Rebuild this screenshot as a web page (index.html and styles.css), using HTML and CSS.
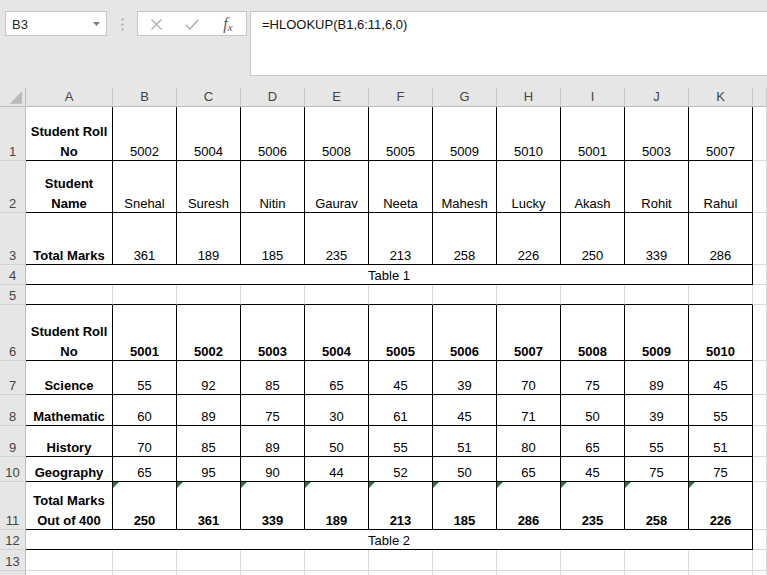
FILE: index.html
```html
<!DOCTYPE html>
<html>
<head>
<meta charset="utf-8">
<title>HLOOKUP</title>
<link rel="stylesheet" href="styles.css">
</head>
<body>
<div class="bar">
  <div class="namebox"><span>B3</span><svg width="7" height="4" viewBox="0 0 7 4"><path d="M0 0H7L3.5 4Z" fill="#7a7a7a"/></svg></div>
  <div class="grip"><svg width="3" height="13" viewBox="0 0 3 13"><circle cx="1.5" cy="1.5" r="1.1" fill="#a3a3a3"/><circle cx="1.5" cy="6.5" r="1.1" fill="#a3a3a3"/><circle cx="1.5" cy="11.5" r="1.1" fill="#a3a3a3"/></svg></div>
  <div class="fxbox">
    <span class="slot"><svg width="11" height="11" viewBox="0 0 11 11"><path d="M0.5 0.5L10.5 10.5M10.5 0.5L0.5 10.5" stroke="#ababab" stroke-width="1.3" fill="none"/></svg></span>
    <span class="slot"><svg width="14" height="11" viewBox="0 0 14 11"><path d="M0.8 5.8L5 10L13.2 0.8" stroke="#ababab" stroke-width="1.3" fill="none"/></svg></span>
    <span class="slot fx"><i>f</i><i class="sx">x</i></span>
  </div>
  <div class="formula">=HLOOKUP(B1,6:11,6,0)</div>
</div>

<div class="sheet">
  <div class="corner"><svg width="26" height="18" viewBox="0 0 26 18"><polygon points="23,3 23,16 10,16" fill="#b9b9b9"/></svg></div>
  <div class="ch">A</div><div class="ch">B</div><div class="ch">C</div><div class="ch">D</div><div class="ch">E</div><div class="ch">F</div><div class="ch">G</div><div class="ch">H</div><div class="ch">I</div><div class="ch">J</div><div class="ch">K</div><div class="ch"></div>

  <div class="rh"><span>1</span></div>
  <div class="k b"><span>Student Roll<br>No</span></div>
  <div class="k"><span>5002</span></div><div class="k"><span>5004</span></div><div class="k"><span>5006</span></div><div class="k"><span>5008</span></div><div class="k"><span>5005</span></div><div class="k"><span>5009</span></div><div class="k"><span>5010</span></div><div class="k"><span>5001</span></div><div class="k"><span>5003</span></div><div class="k"><span>5007</span></div>
  <div></div>

  <div class="rh"><span>2</span></div>
  <div class="k b"><span>Student<br>Name</span></div>
  <div class="k"><span>Snehal</span></div><div class="k"><span>Suresh</span></div><div class="k"><span>Nitin</span></div><div class="k"><span>Gaurav</span></div><div class="k"><span>Neeta</span></div><div class="k"><span>Mahesh</span></div><div class="k"><span>Lucky</span></div><div class="k"><span>Akash</span></div><div class="k"><span>Rohit</span></div><div class="k"><span>Rahul</span></div>
  <div></div>

  <div class="rh"><span>3</span></div>
  <div class="k b"><span>Total Marks</span></div>
  <div class="k"><span>361</span></div><div class="k"><span>189</span></div><div class="k"><span>185</span></div><div class="k"><span>235</span></div><div class="k"><span>213</span></div><div class="k"><span>258</span></div><div class="k"><span>226</span></div><div class="k"><span>250</span></div><div class="k"><span>339</span></div><div class="k"><span>286</span></div>
  <div></div>

  <div class="rh"><span>4</span></div>
  <div class="k m"><span>Table 1</span></div>
  <div></div>

  <div class="rh"><span>5</span></div>
  <div class="kb"></div><div class="kb"></div><div class="kb"></div><div class="kb"></div><div class="kb"></div><div class="kb"></div><div class="kb"></div><div class="kb"></div><div class="kb"></div><div class="kb"></div><div class="kb"></div>
  <div></div>

  <div class="rh"><span>6</span></div>
  <div class="k b"><span>Student Roll<br>No</span></div>
  <div class="k b"><span>5001</span></div><div class="k b"><span>5002</span></div><div class="k b"><span>5003</span></div><div class="k b"><span>5004</span></div><div class="k b"><span>5005</span></div><div class="k b"><span>5006</span></div><div class="k b"><span>5007</span></div><div class="k b"><span>5008</span></div><div class="k b"><span>5009</span></div><div class="k b"><span>5010</span></div>
  <div></div>

  <div class="rh"><span>7</span></div>
  <div class="k b"><span>Science</span></div>
  <div class="k"><span>55</span></div><div class="k"><span>92</span></div><div class="k"><span>85</span></div><div class="k"><span>65</span></div><div class="k"><span>45</span></div><div class="k"><span>39</span></div><div class="k"><span>70</span></div><div class="k"><span>75</span></div><div class="k"><span>89</span></div><div class="k"><span>45</span></div>
  <div></div>

  <div class="rh"><span>8</span></div>
  <div class="k b"><span>Mathematic</span></div>
  <div class="k"><span>60</span></div><div class="k"><span>89</span></div><div class="k"><span>75</span></div><div class="k"><span>30</span></div><div class="k"><span>61</span></div><div class="k"><span>45</span></div><div class="k"><span>71</span></div><div class="k"><span>50</span></div><div class="k"><span>39</span></div><div class="k"><span>55</span></div>
  <div></div>

  <div class="rh"><span>9</span></div>
  <div class="k b"><span>History</span></div>
  <div class="k"><span>70</span></div><div class="k"><span>85</span></div><div class="k"><span>89</span></div><div class="k"><span>50</span></div><div class="k"><span>55</span></div><div class="k"><span>51</span></div><div class="k"><span>80</span></div><div class="k"><span>65</span></div><div class="k"><span>55</span></div><div class="k"><span>51</span></div>
  <div></div>

  <div class="rh"><span>10</span></div>
  <div class="k b"><span>Geography</span></div>
  <div class="k"><span>65</span></div><div class="k"><span>95</span></div><div class="k"><span>90</span></div><div class="k"><span>44</span></div><div class="k"><span>52</span></div><div class="k"><span>50</span></div><div class="k"><span>65</span></div><div class="k"><span>45</span></div><div class="k"><span>75</span></div><div class="k"><span>75</span></div>
  <div></div>

  <div class="rh"><span>11</span></div>
  <div class="k b"><span>Total Marks<br>Out of 400</span></div>
  <div class="k b err"><span>250</span></div><div class="k b err"><span>361</span></div><div class="k b err"><span>339</span></div><div class="k b err"><span>189</span></div><div class="k b err"><span>213</span></div><div class="k b err"><span>185</span></div><div class="k b err"><span>286</span></div><div class="k b err"><span>235</span></div><div class="k b err"><span>258</span></div><div class="k b err"><span>226</span></div>
  <div></div>

  <div class="rh"><span>12</span></div>
  <div class="k m"><span>Table 2</span></div>
  <div></div>

  <div class="rh"><span>13</span></div>
  <div></div><div></div><div></div><div></div><div></div><div></div><div></div><div></div><div></div><div></div><div></div>
  <div></div>

  <div class="rh"></div>
  <div></div><div></div><div></div><div></div><div></div><div></div><div></div><div></div><div></div><div></div><div></div>
  <div></div>
</div>
</body>
</html>
```

FILE: styles.css
```css
html, body {
  margin: 0;
  padding: 0;
  height: 100%;
  overflow: hidden;
  background: #ffffff;
}

body {
  font-family: "Liberation Sans", Arial, sans-serif;
  font-size: 13px;
  color: #000000;
}

/* ---------- formula bar area ---------- */
.bar {
  box-sizing: border-box;
  height: 88px;
  background: #e6e6e6;
  display: flex;
  align-items: flex-start;
  padding: 11px 0 0 5px;
}

.namebox {
  box-sizing: border-box;
  width: 102px;
  height: 25px;
  background: #ffffff;
  border: 1px solid #c6c6c6;
  display: flex;
  align-items: center;
  justify-content: space-between;
  padding: 2px 6px 0 6px;
  color: #262626;
  line-height: 20px;
}

.namebox svg {
  margin-top: -2px;
}

.grip {
  width: 30px;
  height: 25px;
  display: flex;
  align-items: center;
  justify-content: center;
  padding-top: 1px;
  box-sizing: border-box;
}

.fxbox {
  box-sizing: border-box;
  width: 110px;
  height: 25px;
  background: #ffffff;
  border: 1px solid #c6c6c6;
  display: flex;
}

.slot {
  width: 36px;
  display: flex;
  align-items: center;
  justify-content: center;
  padding-top: 1px;
}

.fx {
  font-family: "Liberation Serif", "Times New Roman", serif;
  font-size: 16px;
  color: #555555;
  line-height: 20px;
}

.fx i {
  font-style: italic;
}

.fx .sx {
  font-size: 11px;
  margin-left: 0;
  margin-top: 5px;
}

.formula {
  flex: 1;
  box-sizing: border-box;
  height: 65px;
  margin-left: 3px;
  background: #ffffff;
  border: 1px solid #c6c6c6;
  border-right: none;
  padding: 3px 11px;
  line-height: 20px;
  color: #111111;
}

/* ---------- grid ---------- */
.sheet {
  display: grid;
  grid-template-columns: 26px 87px repeat(10, 64px) 1fr;
  grid-template-rows: 19px 54px 52px 52px 20px 20px 56px 34px 31px 31px 25px 48px 20px 21px 20px;
}

.sheet > div {
  box-sizing: border-box;
  position: relative;
  border-right: 1px solid #d9d9d9;
  border-bottom: 1px solid #d9d9d9;
  display: flex;
  align-items: flex-end;
  justify-content: center;
  text-align: center;
  line-height: 20px;
  white-space: nowrap;
}

.sheet > div > span {
  margin-bottom: -2px;
}

.sheet > .corner {
  background: #e6e6e6;
  border-right-color: #bdbdbd;
  border-bottom-color: #bdbdbd;
  align-items: flex-start;
  justify-content: flex-start;
}

.corner svg {
  display: block;
}

.sheet > .ch {
  background: #e6e6e6;
  color: #444444;
  align-items: center;
  border-right-color: #c9c9c9;
  border-bottom-color: #bdbdbd;
}

.sheet > .rh {
  background: #e6e6e6;
  color: #444444;
  border-right-color: #bdbdbd;
  border-bottom-color: #d2d2d2;
}

.sheet > .k {
  border-right-color: #000000;
  border-bottom-color: #000000;
}

.sheet > .kb {
  border-bottom-color: #000000;
}

.sheet > .m {
  grid-column: span 11;
}

.b {
  font-weight: bold;
}

.err::before {
  content: "";
  position: absolute;
  top: 0;
  left: 0;
  width: 0;
  height: 0;
  border-top: 6px solid #1e7b3c;
  border-right: 6px solid transparent;
}
```
